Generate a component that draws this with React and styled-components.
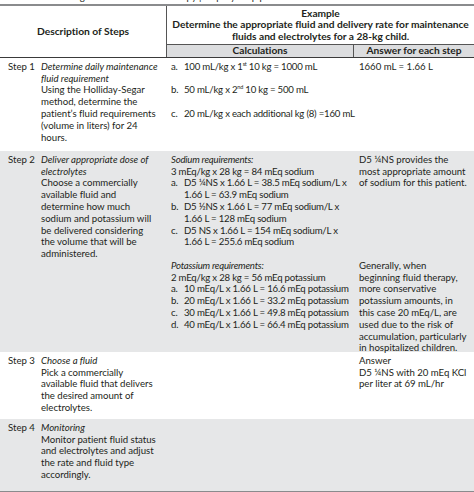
import React from "react";
import styled, { createGlobalStyle } from "styled-components";

const Global = createGlobalStyle`
    html, body { margin: 0; padding: 0; background: #ffffff; }
    body {
        font-family: Lato, "Open Sans", "Liberation Sans", sans-serif;
        color: #231f20;
        font-size: 9.65px;
        letter-spacing: -0.02px;
    }
`;

const COLS = "41px 126px 186px 1fr";

const Page = styled.div`
    width: 474px;
    height: 492px;
    overflow: hidden;
`;

const Caption = styled.div`
    height: 4px;
    overflow: hidden;
    white-space: nowrap;
    line-height: 12px;
    & > span {
        display: block;
        margin-top: -10px;
        padding-left: 6px;
    }
`;

const Head = styled.div`
    display: grid;
    grid-template-columns: 167px 1fr;
    border-top: 2px solid #8a8b8d;
    border-bottom: 1px solid #3a3a3a;
`;

const HeadLeft = styled.div`
    display: flex;
    align-items: center;
    justify-content: center;
    font-weight: 700;
    font-size: 10.3px;
    border-right: 1px solid #555;
    padding-bottom: 1px;
`;

const HeadRight = styled.div`
    display: flex;
    flex-direction: column;
`;

const Example = styled.div`
    text-align: center;
    font-weight: 700;
    font-size: 10.2px;
    line-height: 11.4px;
    padding: 2px 0 2px;
    border-bottom: 1px solid #555;
    white-space: nowrap;
`;

const SubHead = styled.div`
    display: grid;
    grid-template-columns: 186px 1fr;
    background: #dcdddf;
    font-weight: 700;
    font-size: 10.2px;
    line-height: 11.5px;
`;

const SubCell = styled.div`
    text-align: center;
    border-left: ${(p) => (p.$divide ? "1px solid #555" : "none")};
`;

const Row = styled.div`
    display: grid;
    grid-template-columns: ${COLS};
    background: ${(p) => (p.$shade ? "#e6e7e8" : "#ffffff")};
    height: ${(p) => p.$h}px;
    padding-top: 3px;
    box-sizing: border-box;
    line-height: 11.8px;
    white-space: nowrap;
`;

const StepLabel = styled.div`
    padding-left: 8px;
`;

const Cell = styled.div`
    padding-left: ${(p) => p.$pad || 0}px;
    letter-spacing: ${(p) => (p.$tight ? "-0.22px" : "inherit")};
`;

const Em = styled.div`
    font-style: italic;
`;

const Line = styled.div`
    min-height: 11.8px;
`;

const Item = styled.div`
    display: grid;
    grid-template-columns: 13px 1fr;
`;

const Sup = styled.sup`
    font-size: 5.5px;
    line-height: 0;
`;

const Bottom = styled.div`
    height: 3px;
    background: #8a8b8d;
`;

function CalcItem({ mark, lines }) {
    return (
        <Item>
            <span>{mark}</span>
            <div>
                {lines.map((l, i) => (
                    <Line key={i}>{l}</Line>
                ))}
            </div>
        </Item>
    );
}

function Lines({ items }) {
    return items.map((l, i) => <Line key={i}>{l}</Line>);
}

export default function App() {
    return (
        <Page>
            <Global />
            <Caption>
                <span>
                    Table 3 Calculating maintenance fluid therapy | step-by-step process
                </span>
            </Caption>
            <Head>
                <HeadLeft>Description of Steps</HeadLeft>
                <HeadRight>
                    <Example>
                        Example
                        <br />
                        Determine the appropriate fluid and delivery rate for maintenance
                        <br />
                        fluids and electrolytes for a 28-kg child.
                    </Example>
                    <SubHead>
                        <SubCell>Calculations</SubCell>
                        <SubCell $divide>Answer for each step</SubCell>
                    </SubHead>
                </HeadRight>
            </Head>

            <Row $h={93}>
                <StepLabel>Step 1</StepLabel>
                <Cell>
                    <Em>Determine daily maintenance</Em>
                    <Em>fluid requirement</Em>
                    <Lines
                        items={[
                            "Using the Holliday-Segar",
                            "method, determine the",
                            "patient’s fluid requirements",
                            "(volume in liters) for 24",
                            "hours.",
                        ]}
                    />
                </Cell>
                <Cell $pad={4} $tight>
                    <CalcItem
                        mark="a."
                        lines={[
                            <>
                                100 mL/kg x 1<Sup>st</Sup> 10 kg = 1000 mL
                            </>,
                            "",
                        ]}
                    />
                    <CalcItem
                        mark="b."
                        lines={[
                            <>
                                50 mL/kg x 2<Sup>nd</Sup> 10 kg = 500 mL
                            </>,
                            "",
                        ]}
                    />
                    <CalcItem mark="c." lines={["20 mL/kg x each additional kg (8) =160 mL"]} />
                </Cell>
                <Cell $pad={6}>1660 mL = 1.66 L</Cell>
            </Row>

            <Row $shade $h={201}>
                <StepLabel>Step 2</StepLabel>
                <Cell>
                    <Em>Deliver appropriate dose of</Em>
                    <Em>electrolytes</Em>
                    <Lines
                        items={[
                            "Choose a commercially",
                            "available fluid and",
                            "determine how much",
                            "sodium and potassium will",
                            "be delivered considering",
                            "the volume that will be",
                            "administered.",
                        ]}
                    />
                </Cell>
                <Cell $pad={4} $tight>
                    <Em>Sodium requirements:</Em>
                    <Line>3 mEq/kg x 28 kg = 84 mEq sodium</Line>
                    <CalcItem
                        mark="a."
                        lines={["D5 ¼NS x 1.66 L = 38.5 mEq sodium/L x", "1.66 L = 63.9 mEq sodium"]}
                    />
                    <CalcItem
                        mark="b."
                        lines={["D5 ½NS x 1.66 L = 77 mEq sodium/L x", "1.66 L = 128 mEq sodium"]}
                    />
                    <CalcItem
                        mark="c."
                        lines={["D5 NS x 1.66 L = 154 mEq sodium/L x", "1.66 L = 255.6 mEq sodium"]}
                    />
                    <Line />
                    <Em>Potassium requirements:</Em>
                    <Line>2 mEq/kg x 28 kg = 56 mEq potassium</Line>
                    <CalcItem mark="a." lines={["10 mEq/L x 1.66 L = 16.6 mEq potassium"]} />
                    <CalcItem mark="b." lines={["20 mEq/L x 1.66 L = 33.2 mEq potassium"]} />
                    <CalcItem mark="c." lines={["30 mEq/L x 1.66 L = 49.8 mEq potassium"]} />
                    <CalcItem mark="d." lines={["40 mEq/L x 1.66 L = 66.4 mEq potassium"]} />
                </Cell>
                <Cell $pad={6}>
                    <Lines
                        items={[
                            "D5 ¼NS provides the",
                            "most appropriate amount",
                            "of sodium for this patient.",
                            "",
                            "",
                            "",
                            "",
                            "",
                            "",
                            "Generally, when",
                            "beginning fluid therapy,",
                            "more conservative",
                            "potassium amounts, in",
                            "this case 20 mEq/L, are",
                            "used due to the risk of",
                            "accumulation, particularly",
                            "in hospitalized children.",
                        ]}
                    />
                </Cell>
            </Row>

            <Row $h={67}>
                <StepLabel>Step 3</StepLabel>
                <Cell>
                    <Em>Choose a fluid</Em>
                    <Lines
                        items={[
                            "Pick a commercially",
                            "available fluid that delivers",
                            "the desired amount of",
                            "electrolytes.",
                        ]}
                    />
                </Cell>
                <Cell />
                <Cell $pad={6}>
                    <Lines
                        items={["Answer", "D5 ¼NS with 20 mEq KCl", "per liter at 69 mL/hr"]}
                    />
                </Cell>
            </Row>

            <Row $shade $h={72}>
                <StepLabel>Step 4</StepLabel>
                <Cell>
                    <Em>Monitoring</Em>
                    <Lines
                        items={[
                            "Monitor patient fluid status",
                            "and electrolytes and adjust",
                            "the rate and fluid type",
                            "accordingly.",
                        ]}
                    />
                </Cell>
                <Cell />
                <Cell />
            </Row>
            <Bottom />
        </Page>
    );
}
